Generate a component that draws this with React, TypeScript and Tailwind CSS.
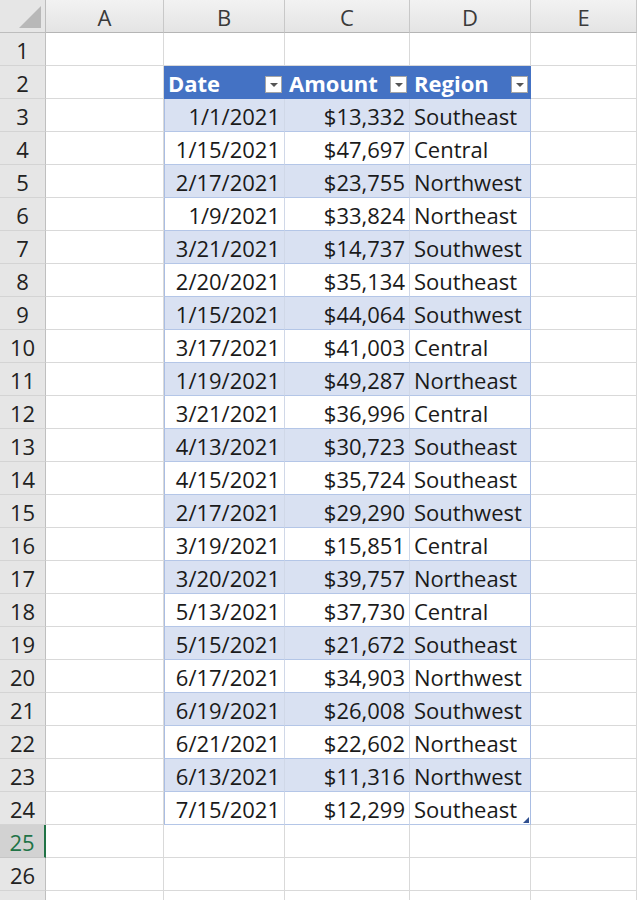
const rows: [string, string, string][] = [
  ["1/1/2021", "$13,332", "Southeast"],
  ["1/15/2021", "$47,697", "Central"],
  ["2/17/2021", "$23,755", "Northwest"],
  ["1/9/2021", "$33,824", "Northeast"],
  ["3/21/2021", "$14,737", "Southwest"],
  ["2/20/2021", "$35,134", "Southeast"],
  ["1/15/2021", "$44,064", "Southwest"],
  ["3/17/2021", "$41,003", "Central"],
  ["1/19/2021", "$49,287", "Northeast"],
  ["3/21/2021", "$36,996", "Central"],
  ["4/13/2021", "$30,723", "Southeast"],
  ["4/15/2021", "$35,724", "Southeast"],
  ["2/17/2021", "$29,290", "Southwest"],
  ["3/19/2021", "$15,851", "Central"],
  ["3/20/2021", "$39,757", "Northeast"],
  ["5/13/2021", "$37,730", "Central"],
  ["5/15/2021", "$21,672", "Southeast"],
  ["6/17/2021", "$34,903", "Northwest"],
  ["6/19/2021", "$26,008", "Southwest"],
  ["6/21/2021", "$22,602", "Northeast"],
  ["6/13/2021", "$11,316", "Northwest"],
  ["7/15/2021", "$12,299", "Southeast"],
]

const grid = "grid grid-cols-[46px_118px_121px_125px_121px_1fr]"

function FilterButton() {
  return (
    <span className="ml-auto mr-[3px] mb-[5px] self-end flex h-[17px] w-[17px] items-center justify-center border border-[#a6a6a6] bg-white">
      <span className="h-0 w-0 border-l-[4px] border-r-[4px] border-t-[4px] border-l-transparent border-r-transparent border-t-[#555]" />
    </span>
  )
}

function RowHeader({ n, active }: { n?: number; active?: boolean }) {
  return (
    <div
      className={
        active
          ? "flex h-[33px] items-center justify-center border-b border-r-2 border-b-[#c6c6c6] border-r-[#217346] bg-[#d2d2d2] pt-[3px] text-[#217346]"
          : "flex h-[33px] items-center justify-center border-b border-r border-b-[#d4d4d4] border-r-[#bfbfbf] bg-[#e6e6e6] pt-[3px] text-[#222]"
      }
    >
      {n}
    </div>
  )
}

function Empty() {
  return <div className="h-[33px] border-b border-r border-[#d9d9d9] bg-white" />
}

export default function App() {
  return (
    <main className="h-[900px] w-[637px] overflow-hidden bg-white text-[22px] text-[#1a1a1a] [font-family:'Open_Sans',sans-serif]">
      {/* column letters */}
      <div className={grid}>
        <div className="relative h-[33px] border-b border-r border-[#bdbdbd] bg-[#e6e6e6]">
          <span className="absolute bottom-[4px] right-[4px] h-[22px] w-[22px] bg-[#b8b8b8] [clip-path:polygon(100%_0,100%_100%,0_100%)]" />
        </div>
        {["A", "B", "C", "D", "E"].map((c) => (
          <div
            key={c}
            className="flex h-[33px] items-center justify-center border-b border-r border-b-[#b5b5b5] border-r-[#c8c8c8] bg-gradient-to-b from-[#f2f2f2] to-[#e4e4e4] pt-[2px] text-[#3a3a3a]"
          >
            {c}
          </div>
        ))}
      </div>

      {/* row 1 */}
      <div className={grid}>
        <RowHeader n={1} />
        <Empty />
        <Empty />
        <Empty />
        <Empty />
        <Empty />
      </div>

      {/* row 2: table header */}
      <div className={grid}>
        <RowHeader n={2} />
        <Empty />
        <div className="flex h-[33px] items-center border-b border-[#4472c4] bg-[#4472c4] pl-[4px] pt-[3px] font-bold text-white">
          Date
          <FilterButton />
        </div>
        <div className="flex h-[33px] items-center border-b border-[#4472c4] bg-[#4472c4] pl-[4px] pt-[3px] font-bold text-white">
          Amount
          <FilterButton />
        </div>
        <div className="flex h-[33px] items-center border-b border-[#4472c4] bg-[#4472c4] pl-[4px] pt-[3px] font-bold text-white">
          Region
          <FilterButton />
        </div>
        <Empty />
      </div>

      {rows.map(([date, amount, region], i) => {
        const band = i % 2 === 0 ? "bg-[#d9e1f2]" : "bg-white"
        const last = i === rows.length - 1
        return (
          <div key={i} className={grid}>
            <RowHeader n={i + 3} />
            <Empty />
            <div className={`flex h-[33px] items-center justify-end border-b border-l border-r border-b-[#b4c6e7] border-l-[#a9bde3] border-r-[#d0d8e8] pr-[4px] pt-[3px] ${band}`}>
              {date}
            </div>
            <div className={`flex h-[33px] items-center justify-end border-b border-r border-b-[#b4c6e7] border-r-[#d0d8e8] pr-[4px] pt-[3px] ${band}`}>
              {amount}
            </div>
            <div className={`relative flex h-[33px] items-center border-b border-r border-b-[#b4c6e7] border-r-[#a9bde3] pl-[4px] pt-[3px] ${band}`}>
              {region}
              {last && (
                <span className="absolute bottom-[1px] right-[1px] h-[6px] w-[6px] bg-[#2f4f8f] [clip-path:polygon(100%_0,100%_100%,0_100%)]" />
              )}
            </div>
            <Empty />
          </div>
        )
      })}

      {[25, 26].map((n) => (
        <div key={n} className={grid}>
          <RowHeader n={n} active={n === 25} />
          <Empty />
          <Empty />
          <Empty />
          <Empty />
          <Empty />
        </div>
      ))}
      {/* partly visible row 27 */}
      <div className={grid}>
        <RowHeader />
        <Empty />
        <Empty />
        <Empty />
        <Empty />
        <Empty />
      </div>
    </main>
  )
}
